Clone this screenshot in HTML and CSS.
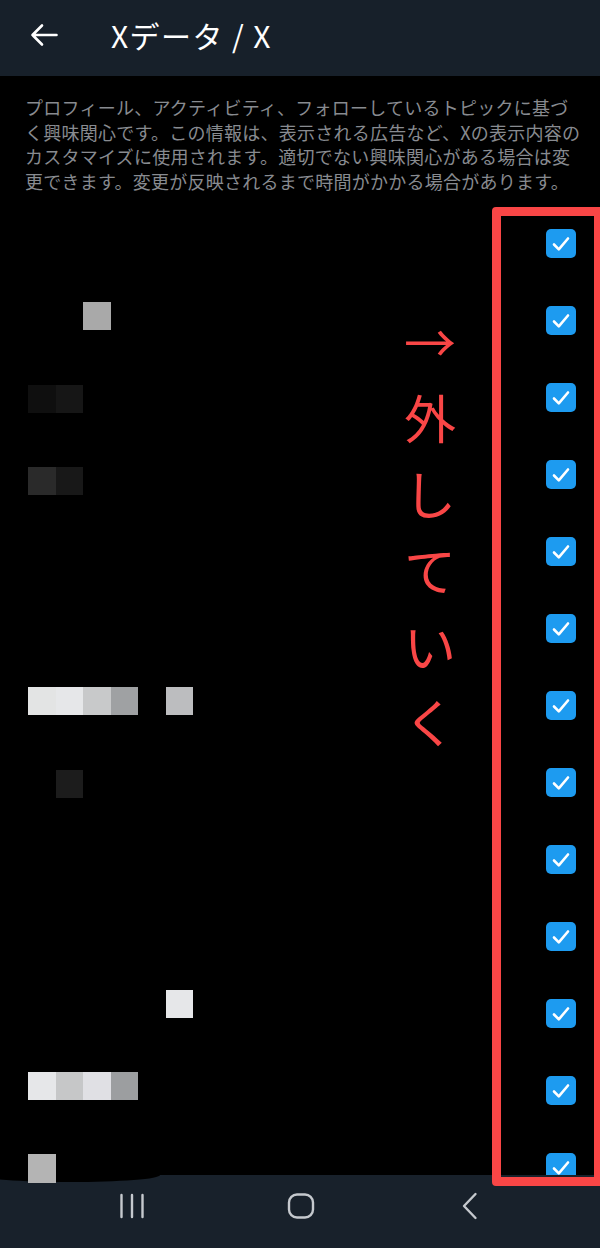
FILE: index.html
```html
<!DOCTYPE html>
<html lang="ja">
<head>
<meta charset="utf-8">
<title>Xデータ / X</title>
<link rel="stylesheet" href="styles.css">
</head>
<body>
<header class="topbar">
  <svg class="back" width="28" height="24" viewBox="0 0 28 24"><path d="M12 2.5 L2.5 12 L12 21.5 M2.5 12 H26.5" fill="none" stroke="#fff" stroke-width="2.6" stroke-linecap="round" stroke-linejoin="round"/></svg>
  <h1 class="title">Xデータ / X</h1>
</header>

<p class="desc">
  <span class="line">プロフィール、アクティビティ、フォローしているトピックに基づ</span>
  <span class="line">く興味関心です。この情報は、表示される広告など、Xの表示内容の</span>
  <span class="line">カスタマイズに使用されます。適切でない興味関心がある場合は変</span>
  <span class="line">更できます。変更が反映されるまで時間がかかる場合があります。</span>
</p>

<ul class="list">
  <li class="row"><div class="mosaic"></div><span class="check"></span></li>
  <li class="row"><div class="mosaic t20"><i></i><i></i><i class="g1"></i></div><span class="check"></span></li>
  <li class="row"><div class="mosaic t26"><i class="g2"></i><i class="g3"></i></div><span class="check"></span></li>
  <li class="row"><div class="mosaic t31"><i class="g4"></i><i class="g5"></i></div><span class="check"></span></li>
  <li class="row"><div class="mosaic"></div><span class="check"></span></li>
  <li class="row"><div class="mosaic"></div><span class="check"></span></li>
  <li class="row"><div class="mosaic t20"><i class="g6"></i><i class="g7"></i><i class="g8"></i><i class="g9"></i><i></i><i class="g10"></i></div><span class="check"></span></li>
  <li class="row"><div class="mosaic t26"><i></i><i class="g11"></i></div><span class="check"></span></li>
  <li class="row"><div class="mosaic"></div><span class="check"></span></li>
  <li class="row"><div class="mosaic"></div><span class="check"></span></li>
  <li class="row"><div class="mosaic t15"><i></i><i></i><i></i><i></i><i></i><i class="g7"></i></div><span class="check"></span></li>
  <li class="row"><div class="mosaic t20"><i class="g7"></i><i class="g12"></i><i class="g13"></i><i class="g14"></i></div><span class="check"></span></li>
  <li class="row"><div class="mosaic t25 front"><i class="g15"></i></div><span class="check"></span></li>
</ul>

<div class="blob"></div>

<nav class="navbar">
  <svg width="26" height="26" viewBox="0 0 26 26"><path d="M2.5 2 V24 M13 2 V24 M23.5 2 V24" stroke="#c5c9ce" stroke-width="2.4" stroke-linecap="round"/></svg>
  <svg width="28" height="26" viewBox="0 0 28 26"><rect x="2" y="1.5" width="24" height="23" rx="8" fill="none" stroke="#c5c9ce" stroke-width="2.4"/></svg>
  <svg width="18" height="28" viewBox="0 0 18 28"><path d="M14.5 2 L3 14 L14.5 26" fill="none" stroke="#c5c9ce" stroke-width="2.4" stroke-linecap="round" stroke-linejoin="round"/></svg>
</nav>

<div class="redbox"></div>
<div class="note">
  <span>→</span><span>外</span><span>し</span><span>て</span><span>い</span><span>く</span>
</div>
</body>
</html>
```

FILE: styles.css
```css
html, body {
  margin: 0;
  padding: 0;
  background: #000;
  overflow: hidden;
  height: 1248px;
}
body {
  font-family: "Noto Sans CJK JP", "Noto Sans", sans-serif;
  color: #fff;
  position: relative;
}
.topbar {
  height: 76px;
  background: #17202a;
  display: flex;
  align-items: center;
  padding-left: 30px;
  box-sizing: border-box;
}
.back {
  display: block;
  margin-top: -6px;
}
.title {
  margin: -6px 0 0 53px;
  font-size: 30px;
  font-weight: 400;
  line-height: 1;
  letter-spacing: 1.4px;
}
.desc {
  margin: 19px 0 0 0;
  padding: 0 0 0 25px;
  font-size: 18px;
  line-height: 24.5px;
  letter-spacing: 0.25px;
  color: #888b90;
}
.line {
  display: block;
  white-space: nowrap;
}
.list {
  list-style: none;
  margin: 12px 0 0 0;
  padding: 0;
}
.row {
  height: 77px;
  display: flex;
  justify-content: space-between;
  align-items: flex-start;
}
.mosaic {
  display: flex;
  padding-left: 28px;
}
.mosaic i {
  display: block;
  width: 27.5px;
  height: 27.5px;
}
.t15 { margin-top: 15px; }
.t20 { margin-top: 20px; }
.t25 { margin-top: 25px; }
.t26 { margin-top: 26px; }
.t31 { margin-top: 31px; }
.front { position: relative; z-index: 5; }
.front i { height: 28.5px; }
.g1 { background: #a9a9a9; }
.g2 { background: #0f0f0f; }
.g3 { background: #161616; }
.g4 { background: #2a2a2a; }
.g5 { background: #181818; }
.g6 { background: #e3e4e4; }
.g7 { background: #e6e7e9; }
.g8 { background: #c8c9ca; }
.g9 { background: #9fa1a3; }
.g10 { background: #bcbdbf; }
.g11 { background: #1c1c1c; }
.g12 { background: #c6c7c8; }
.g13 { background: #e0e0e4; }
.g14 { background: #9c9ea0; }
.g15 { background: #b4b4b4; }
.check {
  width: 30px;
  height: 29px;
  margin: 24px 24px 0 0;
  border-radius: 5px;
  background: #1d9bf0 url("data:image/svg+xml;utf8,<svg xmlns='http://www.w3.org/2000/svg' width='30' height='29' viewBox='0 0 30 29'><path d='M8 15.5 L12.8 20.3 L22 9.5' fill='none' stroke='white' stroke-width='2.6' stroke-linecap='round' stroke-linejoin='round'/></svg>") no-repeat center;
}
.navbar {
  position: absolute;
  left: 0;
  right: 0;
  top: 1175px;
  height: 73px;
  background: #18212b;
  display: grid;
  grid-template-columns: repeat(3, 1fr);
  justify-items: center;
  align-items: center;
  padding: 0 46px 0 47px;
  box-sizing: border-box;
  z-index: 2;
}
.navbar svg { display: block; margin-top: -12px; }
.blob {
  position: absolute;
  left: -20px;
  top: 1168px;
  width: 180px;
  height: 14px;
  border-radius: 50%;
  background: #000;
  z-index: 3;
}
.redbox {
  position: absolute;
  left: 492px;
  top: 207px;
  width: 111px;
  height: 979px;
  border: 9px solid #f94646;
  border-radius: 4px;
  box-sizing: border-box;
  z-index: 10;
}
.note {
  position: absolute;
  left: 400px;
  top: 303px;
  display: flex;
  flex-direction: column;
  font-size: 52px;
  line-height: 76px;
  color: #f94646;
  z-index: 10;
}
.note span { display: block; text-align: center; width: 60px; }
```
